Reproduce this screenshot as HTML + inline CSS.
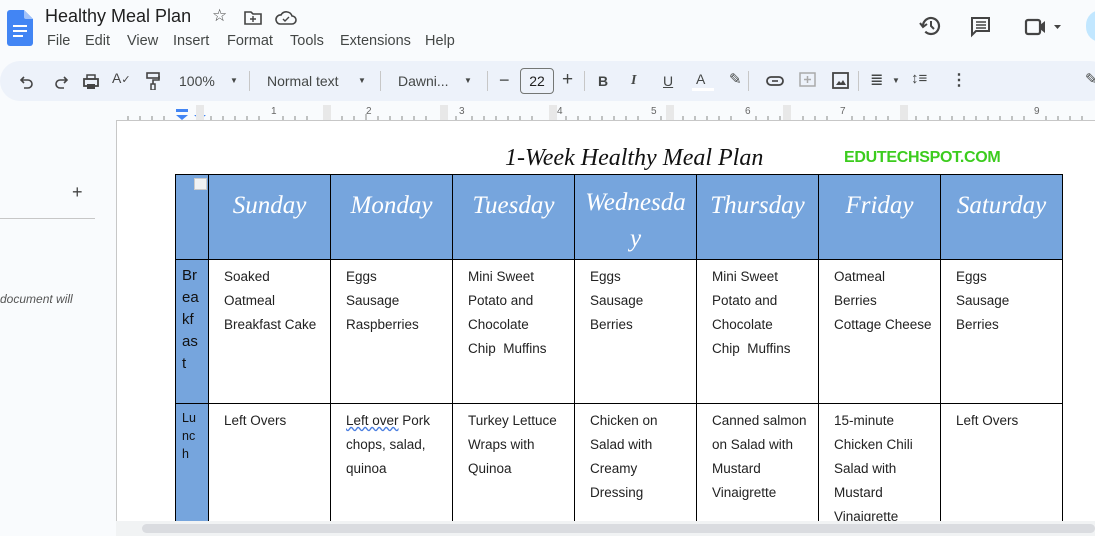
<!DOCTYPE html>
<html><head><meta charset="utf-8">
<style>
*{margin:0;padding:0;box-sizing:border-box}
html,body{overflow:hidden}
body{width:1095px;height:536px;overflow:hidden;background:#f9fbfd;font-family:"Liberation Sans",Arial,sans-serif;position:relative;color:#444746}
.a{position:absolute;white-space:nowrap}
.m{position:absolute;top:33px;font-size:14.5px;color:#444746}
.tb{position:absolute;left:0;top:61px;width:1110px;height:40px;background:#edf2fa;border-radius:20px}
.tb .a{font-size:14px;color:#444746}
.dd{font-size:8px!important;top:15px!important}
.sep{position:absolute;top:71px;width:1px;height:20px;background:#c7c7c7}
.ruler{position:absolute;left:116px;top:102px;width:979px;height:19px;background:#f9fbfd;border-bottom:1px solid #c7c7c7}
.page{position:absolute;left:116px;top:121px;width:979px;height:400px;background:#fff;border-left:1px solid #c7c7c7}
.cell{position:absolute;border:1px solid #000;}
.hd{background:#76a5dd;color:#fff;font-family:"Liberation Serif",serif;font-style:italic;font-size:25px;text-align:center;padding-top:17px}
.tx{font-size:13.5px;color:#222;line-height:24px;padding:5px 0 0 15px;white-space:nowrap}
</style></head><body>
<svg class="a" style="left:7px;top:10px" width="26" height="36" viewBox="0 0 26 36"><path d="M3 0h14l9 9v24a3 3 0 0 1-3 3H3a3 3 0 0 1-3-3V3a3 3 0 0 1 3-3z" fill="#4285f4"/><path d="M17 0l9 9h-7a2 2 0 0 1-2-2z" fill="#a1c2fa"/><rect x="6" y="15" width="14" height="2" fill="#fff"/><rect x="6" y="20" width="14" height="2" fill="#fff"/><rect x="6" y="25" width="10" height="2" fill="#fff"/></svg>
<div class="a" style="left:45px;top:6px;font-size:18px;color:#1f1f1f">Healthy Meal Plan</div>
<div class="a" style="left:212px;top:6px;font-size:17px;color:#444">☆</div>
<svg class="a" style="left:244px;top:10px" width="18" height="16"><path d="M1 2h6l2 2h8v10H1z" fill="none" stroke="#444" stroke-width="1.6"/><path d="M9 6v6M6 9h6" stroke="#444" stroke-width="1.4"/></svg>
<svg class="a" style="left:275px;top:10px" width="22" height="16"><path d="M5 14h12a4 4 0 0 0 0-8 6 6 0 0 0-11-1 4.5 4.5 0 0 0-1 9z" fill="none" stroke="#444" stroke-width="1.6"/><path d="M8 9l2 2 4-4" fill="none" stroke="#444" stroke-width="1.4"/></svg>
<div class="m" style="left:47px">File</div><div class="m" style="left:85px">Edit</div><div class="m" style="left:127px">View</div><div class="m" style="left:173px">Insert</div><div class="m" style="left:227px">Format</div><div class="m" style="left:290px">Tools</div><div class="m" style="left:340px">Extensions</div><div class="m" style="left:425px">Help</div>
<svg class="a" style="left:919px;top:14px" width="24" height="24" viewBox="0 0 24 24"><path d="M4 12a8 8 0 1 1 2.3 5.6" fill="none" stroke="#444" stroke-width="2.2"/><path d="M1 9l3 4 4-3" fill="none" stroke="#444" stroke-width="2"/><path d="M12 7v5l3 3" fill="none" stroke="#444" stroke-width="2"/></svg>
<svg class="a" style="left:970px;top:16px" width="22" height="22"><path d="M2 2h17v13H6l-4 4z" fill="none" stroke="#444" stroke-width="2"/><path d="M6 6h10M6 9h10M6 12h10" stroke="#444" stroke-width="1.6"/></svg>
<svg class="a" style="left:1024px;top:17px" width="40" height="20"><rect x="2" y="3" width="14" height="14" rx="2" fill="none" stroke="#444" stroke-width="2.2"/><path d="M16 8l5-4v12l-5-4z" fill="#444"/><path d="M30 8h7l-3.5 4z" fill="#444"/></svg>
<div class="a" style="left:1086px;top:10px;width:30px;height:32px;border-radius:16px;background:#c2e7ff"></div>
<div class="tb"></div>
<svg class="a" style="left:20px;top:74px" width="140" height="16"><path d="M4 3L1 6l3 3M1 6h7a4 4 0 0 1 0 8H4" fill="none" stroke="#444" stroke-width="1.6"/><path d="M44 3l3 3-3 3M47 6h-7a4 4 0 0 0 0 8h4" fill="none" stroke="#444" stroke-width="1.6"/><rect x="64" y="5" width="14" height="7" fill="none" stroke="#444" stroke-width="1.8"/><rect x="67" y="1" width="8" height="4" fill="none" stroke="#444" stroke-width="1.5"/><rect x="67" y="10" width="8" height="5" fill="#444"/></svg>
<div class="a" style="left:112px;top:70px;font-size:14px;color:#444">A<span style="font-size:11px">✓</span></div>
<svg class="a" style="left:146px;top:72px" width="14" height="18"><rect x="1" y="1" width="12" height="5" fill="none" stroke="#444" stroke-width="1.6"/><path d="M13 4v4H7v4" fill="none" stroke="#444" stroke-width="1.6"/><rect x="5" y="12" width="4" height="6" fill="none" stroke="#444" stroke-width="1.5"/></svg>
<div class="tb" style="background:none;top:61px">
<div class="a" style="left:179px;top:12px">100%</div><div class="a dd" style="left:230px">▼</div>
<div class="a" style="left:267px;top:12px">Normal text</div><div class="a dd" style="left:358px">▼</div>
<div class="a" style="left:398px;top:12px">Dawni...</div><div class="a dd" style="left:464px">▼</div>
<div class="a" style="left:499px;top:9px;font-size:18px">−</div>
<div class="a" style="left:520px;top:7px;width:34px;height:26px;border:1px solid #747775;border-radius:4px;text-align:center;line-height:24px;color:#1f1f1f">22</div>
<div class="a" style="left:562px;top:8px;font-size:19px">+</div>
<div class="a" style="left:598px;top:12px;font-weight:bold">B</div>
<div class="a" style="left:631px;top:12px;font-style:italic;font-family:'Liberation Serif',serif;font-weight:bold">I</div>
<div class="a" style="left:663px;top:12px;text-decoration:underline">U</div>
<div class="a" style="left:696px;top:10px">A</div><div class="a" style="left:692px;top:27px;width:22px;height:3px;background:#fff"></div>
<div class="a" style="left:729px;top:9px;font-size:15px">✎</div>
<svg class="a" style="left:766px;top:14px" width="18" height="12"><rect x="1" y="2" width="16" height="8" rx="4" fill="none" stroke="#444" stroke-width="1.8"/><path d="M5 6h8" stroke="#edf2fa" stroke-width="3"/><path d="M6 6h6" stroke="#444" stroke-width="1.6"/></svg>
<svg class="a" style="left:799px;top:11px" width="18" height="18"><rect x="1" y="1" width="15" height="13" fill="none" stroke="#aaa" stroke-width="1.5"/><path d="M8.5 4v7M5 7.5h7" stroke="#aaa" stroke-width="1.5"/></svg>
<svg class="a" style="left:832px;top:11px" width="18" height="18"><rect x="1" y="1" width="15" height="15" fill="none" stroke="#444" stroke-width="1.8"/><path d="M4 13l3-4 2 2 2-3 3 5z" fill="#444"/></svg>
<div class="a" style="left:870px;top:9px;font-size:16px">≣</div><div class="a dd" style="left:892px">▼</div>
<div class="a" style="left:911px;top:9px;font-size:15px">↕≡</div>
<div class="a" style="left:951px;top:9px;font-size:16px;font-weight:bold">⋮</div>
<div class="a" style="left:1085px;top:9px;font-size:15px">✎</div>
</div>
<div class="sep" style="left:249px"></div><div class="sep" style="left:380px"></div><div class="sep" style="left:487px"></div><div class="sep" style="left:584px"></div><div class="sep" style="left:748px"></div><div class="sep" style="left:858px"></div>
<div class="ruler">
<svg width="979" height="19" style="position:absolute;left:0;top:0">
<g fill="#666" font-size="10" font-family="Liberation Sans">
<text x="250" y="12">2</text><text x="155" y="12">1</text><text x="343" y="12">3</text><text x="441" y="12">4</text><text x="535" y="12">5</text><text x="629" y="12">6</text><text x="724" y="12">7</text><text x="918" y="12">9</text></g>
<path d="M60 13l6 5 6-5zM78 13l6 5 6-5z" fill="#4285f4"/><rect x="60" y="7" width="12" height="3" fill="#4285f4"/>
<g fill="#e8e8e8"><rect x="80" y="3" width="8" height="15"/><rect x="207" y="3" width="8" height="15"/><rect x="324" y="3" width="8" height="15"/><rect x="433" y="3" width="8" height="15"/><rect x="550" y="3" width="8" height="15"/><rect x="667" y="3" width="8" height="15"/><rect x="784" y="3" width="8" height="15"/></g>
<g stroke="#888">
<path d="M12 14v4M24 14v4M36 14v4M48 14v4M95 14v4M107 14v4M119 14v4M131 14v4M143 14v4M167 14v4M179 14v4M191 14v4M226 14v4M238 14v4M250 12v6M262 14v4M274 14v4M286 14v4M298 14v4M310 14v4M340 14v4M356 14v4M368 14v4M380 14v4M392 14v4M404 14v4M416 14v4M450 14v4M462 14v4M474 14v4M486 14v4M498 14v4M510 14v4M522 14v4M545 14v4M567 14v4M579 14v4M591 14v4M603 14v4M615 14v4M640 14v4M652 14v4M664 14v4M687 14v4M699 14v4M711 14v4M736 14v4M748 14v4M760 14v4M772 14v4M800 14v4M812 14v4M824 14v4M836 14v4M848 14v4M860 14v4M872 14v4M884 14v4M896 14v4M908 14v4M930 14v4M942 14v4M954 14v4M966 14v4"/></g>
</svg></div>
<div class="a" style="left:72px;top:182px;font-size:18px;color:#444">+</div>
<div class="a" style="left:0;top:218px;width:95px;height:1px;background:#c7c7c7"></div>
<div class="a" style="left:0;top:292px;font-size:12px;font-style:italic;color:#555">document will</div>
<div class="page"></div>
<div class="a" style="left:505px;top:145px;font-family:'Liberation Serif',serif;font-style:italic;font-size:24px;color:#111">1-Week Healthy Meal Plan</div>
<div class="a" style="left:844px;top:149px;font-size:16px;font-weight:bold;color:#3ccc1e;letter-spacing:-0.3px">EDUTECHSPOT.COM</div>
<div class="a" style="left:0;top:0;width:1095px;height:521px;overflow:hidden">
<div class="cell hd" style="left:175px;top:174px;width:34px;height:86px"><div style="position:absolute;left:18px;top:3px;width:13px;height:12px;background:#f1f3f4;border:1px solid #ccc"></div></div>
<div class="cell hd" style="left:208px;top:174px;width:123px;height:86px">Sunday</div>
<div class="cell hd" style="left:330px;top:174px;width:123px;height:86px">Monday</div>
<div class="cell hd" style="left:452px;top:174px;width:123px;height:86px">Tuesday</div>
<div class="cell hd" style="left:574px;top:174px;width:123px;height:86px;line-height:36px;padding-top:10px">Wednesda<br>y</div>
<div class="cell hd" style="left:696px;top:174px;width:123px;height:86px">Thursday</div>
<div class="cell hd" style="left:818px;top:174px;width:123px;height:86px">Friday</div>
<div class="cell hd" style="left:940px;top:174px;width:123px;height:86px">Saturday</div>
<div class="cell" style="left:175px;top:259px;width:34px;height:145px;background:#76a5dd;font-size:15px;color:#111;line-height:22px;padding:5px 0 0 6px">Br<br>ea<br>kf<br>as<br>t</div>
<div class="cell tx" style="left:208px;top:259px;width:123px;height:145px">Soaked<br>Oatmeal<br>Breakfast Cake</div>
<div class="cell tx" style="left:330px;top:259px;width:123px;height:145px">Eggs<br>Sausage<br>Raspberries</div>
<div class="cell tx" style="left:452px;top:259px;width:123px;height:145px">Mini Sweet<br>Potato and<br>Chocolate<br>Chip&nbsp; Muffins</div>
<div class="cell tx" style="left:574px;top:259px;width:123px;height:145px">Eggs<br>Sausage<br>Berries</div>
<div class="cell tx" style="left:696px;top:259px;width:123px;height:145px">Mini Sweet<br>Potato and<br>Chocolate<br>Chip&nbsp; Muffins</div>
<div class="cell tx" style="left:818px;top:259px;width:123px;height:145px">Oatmeal<br>Berries<br>Cottage Cheese</div>
<div class="cell tx" style="left:940px;top:259px;width:123px;height:145px">Eggs<br>Sausage<br>Berries</div>
<div class="cell" style="left:175px;top:403px;width:34px;height:130px;background:#76a5dd;font-size:12.5px;color:#111;line-height:18px;padding:5px 0 0 6px">Lu<br>nc<br>h</div>
<div class="cell tx" style="left:208px;top:403px;width:123px;height:130px">Left Overs</div>
<div class="cell tx" style="left:330px;top:403px;width:123px;height:130px"><span style="text-decoration:underline wavy #4a7ee0">Left over</span> Pork<br>chops, salad,<br>quinoa</div>
<div class="cell tx" style="left:452px;top:403px;width:123px;height:130px">Turkey Lettuce<br>Wraps with<br>Quinoa</div>
<div class="cell tx" style="left:574px;top:403px;width:123px;height:130px">Chicken on<br>Salad with<br>Creamy<br>Dressing</div>
<div class="cell tx" style="left:696px;top:403px;width:123px;height:130px">Canned salmon<br>on Salad with<br>Mustard<br>Vinaigrette</div>
<div class="cell tx" style="left:818px;top:403px;width:123px;height:130px">15-minute<br>Chicken Chili<br>Salad with<br>Mustard<br>Vinaigrette</div>
<div class="cell tx" style="left:940px;top:403px;width:123px;height:130px">Left Overs</div>
</div>
<div class="a" style="left:116px;top:521px;width:979px;height:15px;background:#f1f3f4"></div>
<div class="a" style="left:142px;top:524px;width:953px;height:9px;border-radius:5px;background:#dadce0"></div>
</body></html>
